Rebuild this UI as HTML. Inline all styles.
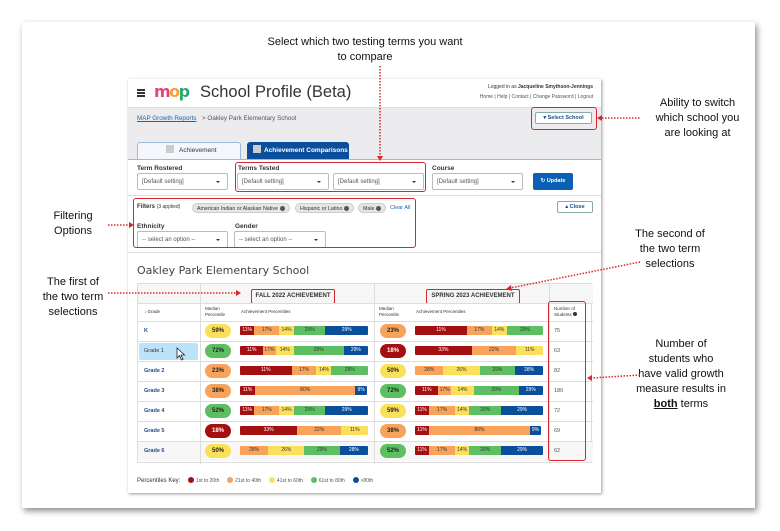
<!DOCTYPE html>
<html><head><meta charset="utf-8">
<style>
*{margin:0;padding:0;box-sizing:border-box}
body{width:780px;height:531px;background:#fff;position:relative;overflow:hidden;font-family:"Liberation Sans",sans-serif;color:#222}
.abs{position:absolute}
.frame{left:22px;top:22px;width:733px;height:486px;background:#fff;box-shadow:2px 3px 6px rgba(0,0,0,.45)}
.panel{left:128px;top:79px;width:473px;height:414px;background:#fff;box-shadow:1px 1px 3px rgba(0,0,0,.4);overflow:hidden}
.ann{position:absolute;font-size:11px;line-height:15px;text-align:center;color:#111}
.rb{position:absolute;border:1.5px solid #d8262e;border-radius:3px}
.sel{position:absolute;height:17px;border:1px solid #bbb;border-radius:2px;background:#fff;font-size:6px;color:#555;padding:5px 4px 0 4px}
.sel:after{content:"";position:absolute;right:7px;top:7px;border:2px solid transparent;border-top:2.5px solid #333}
.lbl{position:absolute;font-size:6.5px;font-weight:bold;color:#333}
.chip{position:absolute;top:124px;height:10px;border-radius:5px;background:#e6e6e6;border:1px solid #ccc;font-size:5.3px;color:#333;padding:1.5px 4px 0 4px;white-space:nowrap}
.chip b{display:inline-block;width:5px;height:5px;border-radius:50%;background:#555;margin-left:2px;vertical-align:-1px}
.tbl{position:absolute;left:9px;top:204px;width:455px;border:1px solid #ddd}
.row{position:absolute;left:0;width:455px;border-top:1px solid #ddd}
.pill{position:absolute;width:26px;height:14px;border-radius:7px;font-size:6px;font-weight:bold;text-align:center;line-height:14px;color:#222}
.bar{position:absolute;height:9px;display:flex;border-radius:1px;overflow:hidden}
.bar span{display:block;height:9px;font-size:5px;line-height:9px;text-align:center;color:#333}
.r{background:#a40f12;color:#fff!important}.o{background:#f7a35c}.y{background:#fbe15b}.g{background:#5dbe62}.b{background:#0b4f9c;color:#fff!important}
.gr{position:absolute;left:6px;font-size:5.5px;font-weight:bold;color:#1b4d87}
.n{position:absolute;left:416px;font-size:5.5px;color:#555}
.vl{position:absolute;top:0;width:1px;background:#ddd}
</style></head><body>
<div class="abs frame"></div>

<div class="ann" style="left:240px;top:35px;width:250px">Select which two testing terms you want<br>to compare</div>
<div class="ann" style="left:630px;top:96px;width:135px">Ability to switch<br>which school you<br>are looking at</div>
<div class="ann" style="left:30px;top:209px;width:86px">Filtering<br>Options</div>
<div class="ann" style="left:25px;top:275px;width:96px">The first of<br>the two term<br>selections</div>
<div class="ann" style="left:615px;top:227px;width:110px">The second of<br>the two term<br>selections</div>
<div class="ann" style="left:618px;top:337px;width:126px">Number of<br>students who<br>have valid growth<br>measure results in<br><b><u>both</u></b> terms</div>

<div class="abs panel">
 <div class="abs" style="left:9px;top:10px;width:8px;height:1.5px;background:#333;box-shadow:0 3px 0 #333,0 6px 0 #333"></div>
 <div class="abs" style="left:26px;top:3px;font-size:16px;font-weight:bold;letter-spacing:-1.5px;font-family:'DejaVu Sans',sans-serif"><span style="color:#e0457b">m</span><span style="color:#f2a33a">o</span><span style="color:#2aa876">p</span></div>
 <div class="abs" style="left:72px;top:4px;font-size:16.5px;color:#333;font-family:'Liberation Sans',sans-serif">School Profile (Beta)</div>
 <div class="abs" style="right:8px;top:5px;font-size:5px;color:#333">Logged in as <b>Jacqueline Smythson-Jennings</b></div>
 <div class="abs" style="right:8px;top:15px;font-size:5px;color:#555">Home | Help | Contact | Change Password | Logout</div>
 <div class="abs" style="left:0;top:28px;width:473px;height:52px;background:#ececef;border-top:1px solid #ddd"></div>
 <div class="abs" style="left:9px;top:36px;font-size:6.3px;color:#1b63b0;text-decoration:underline">MAP Growth Reports</div>
 <div class="abs" style="left:74px;top:36px;font-size:6.3px;color:#555">&gt; Oakley Park Elementary School</div>
 <div class="abs" style="left:407px;top:33px;width:57px;height:12px;background:#fff;border:1px solid #8aa;border-radius:2px;font-size:5.5px;font-weight:bold;color:#1b4d87;text-align:center;line-height:10px">▾ Select School</div>
 <div class="rb" style="left:403px;top:28px;width:66px;height:23px"></div>
 <div class="abs" style="left:9px;top:63px;width:104px;height:18px;background:#f4f8fc;border:1px solid #9bbbd8;border-bottom:none;border-radius:3px 3px 0 0;font-size:6.5px;color:#333;line-height:16px"><span style="display:inline-block;width:8px;height:8px;background:#ccc;margin:0 5px 0 28px;vertical-align:-1px"></span>Achievement</div>
 <div class="abs" style="left:119px;top:63px;width:102px;height:18px;background:#0b4f9c;border-radius:3px 3px 0 0;font-size:6.5px;font-weight:bold;color:#fff;line-height:17px"><span style="display:inline-block;width:8px;height:8px;background:#ccc;margin:0 3px 0 6px;vertical-align:-1px"></span>Achievement Comparisons</div>
 <div class="abs" style="left:0;top:80px;width:473px;height:1px;background:#9bbbd8"></div>
 <div class="lbl" style="left:9px;top:86px">Term Rostered</div>
 <div class="sel" style="left:9px;top:94px;width:91px">[Default setting]</div>
 <div class="lbl" style="left:110px;top:86px">Terms Tested</div>
 <div class="sel" style="left:109px;top:94px;width:92px">[Default setting]</div>
 <div class="sel" style="left:205px;top:94px;width:91px">[Default setting]</div>
 <div class="rb" style="left:107px;top:83px;width:191px;height:30px"></div>
 <div class="lbl" style="left:304px;top:86px">Course</div>
 <div class="sel" style="left:304px;top:94px;width:91px">[Default setting]</div>
 <div class="abs" style="left:405px;top:94px;width:40px;height:17px;background:#0b5fb4;border-radius:2px;color:#fff;font-size:5.5px;font-weight:bold;text-align:center;line-height:17px">↻ Update</div>
 <div class="abs" style="left:0;top:116px;width:473px;height:1px;background:#ddd"></div>
 <div class="abs" style="left:9px;top:125px;font-size:6px;color:#333"><b>Filters</b> <span style="font-size:5px">(3 applied)</span></div>
 <div class="chip" style="left:64px">American Indian or Alaskan Native<b></b></div>
 <div class="chip" style="left:167px">Hispanic or Latino<b></b></div>
 <div class="chip" style="left:230px">Male<b></b></div>
 <div class="abs" style="left:262px;top:126px;font-size:5.5px;color:#1b63b0">Clear All</div>
 <div class="abs" style="left:429px;top:122px;width:36px;height:12px;border:1px solid #8aa;border-radius:2px;font-size:5.5px;font-weight:bold;color:#1b4d87;text-align:center;line-height:10px">▴ Close</div>
 <div class="lbl" style="left:9px;top:144px">Ethnicity</div>
 <div class="sel" style="left:9px;top:152px;width:91px">-- select an option --</div>
 <div class="lbl" style="left:107px;top:144px">Gender</div>
 <div class="sel" style="left:106px;top:152px;width:92px">-- select an option --</div>
 <div class="rb" style="left:5px;top:119px;width:283px;height:50px"></div>
 <div class="abs" style="left:0;top:173px;width:473px;height:1px;background:#ddd"></div>
 <div class="abs" style="left:9px;top:185px;font-size:11px;color:#444;font-family:'DejaVu Sans',sans-serif">Oakley Park Elementary School</div>
 <div class="tbl" style="height:180px;background:#fff">
  <div class="abs" style="left:0;top:0;width:455px;height:19px;background:#f6f6f6"></div>
  <div class="vl" style="left:62px;height:180px"></div>
  <div class="vl" style="left:236px;height:180px"></div>
  <div class="vl" style="left:411px;height:180px"></div>
  <div class="abs" style="left:113px;top:5px;width:84px;height:15px;border:1.5px solid #d8262e;border-radius:2px;font-size:6px;font-weight:bold;color:#333;text-align:center;line-height:12px">FALL 2022 ACHIEVEMENT</div>
  <div class="abs" style="left:288px;top:5px;width:94px;height:15px;border:1.5px solid #d8262e;border-radius:2px;font-size:6px;font-weight:bold;color:#333;text-align:center;line-height:12px">SPRING 2023 ACHIEVEMENT</div>
  <div class="row" style="top:19px;height:18px"></div>
  <div class="abs" style="left:6px;top:25px;font-size:4.5px;color:#333">↓ Grade</div>
  <div class="abs" style="left:67px;top:22px;font-size:4.5px;color:#333;line-height:6px">Median<br>Percentile</div>
  <div class="abs" style="left:103px;top:25px;font-size:4.5px;color:#333">Achievement Percentiles</div>
  <div class="abs" style="left:241px;top:22px;font-size:4.5px;color:#333;line-height:6px">Median<br>Percentile</div>
  <div class="abs" style="left:278px;top:25px;font-size:4.5px;color:#333">Achievement Percentiles</div>
  <div class="abs" style="left:416px;top:22px;font-size:4.5px;color:#333;line-height:6px">Number of<br>Students <span style="display:inline-block;width:4px;height:4px;border-radius:50%;background:#333"></span></div>
 </div>
 <div class="abs" style="left:9px;top:398px;font-size:6px;color:#333;white-space:nowrap">Percentiles Key:
  <span style="display:inline-block;width:6px;height:6px;border-radius:50%;background:#a40f12;margin:0 2px 0 6px;vertical-align:-1px"></span><span style="font-size:5px;color:#555">1st to 20th</span>
  <span style="display:inline-block;width:6px;height:6px;border-radius:50%;background:#f7a35c;margin:0 2px 0 6px;vertical-align:-1px"></span><span style="font-size:5px;color:#555">21st to 40th</span>
  <span style="display:inline-block;width:6px;height:6px;border-radius:50%;background:#fbe15b;margin:0 2px 0 6px;vertical-align:-1px"></span><span style="font-size:5px;color:#555">41st to 60th</span>
  <span style="display:inline-block;width:6px;height:6px;border-radius:50%;background:#5dbe62;margin:0 2px 0 6px;vertical-align:-1px"></span><span style="font-size:5px;color:#555">61st to 80th</span>
  <span style="display:inline-block;width:6px;height:6px;border-radius:50%;background:#0b4f9c;margin:0 2px 0 6px;vertical-align:-1px"></span><span style="font-size:5px;color:#555">&gt;80th</span>
 </div>
</div>

<div class="abs" style="left:138px;top:284px;width:455px;height:180px">
 <div class="row" style="top:37px;height:20px"></div><div class="gr" style="top:44px">K</div>
 <div class="pill y" style="left:67px;top:40px">59%</div>
 <div class="bar" style="left:102px;top:42px;width:128px"><span class="r" style="flex:43">11%</span><span class="o" style="flex:75">17%</span><span class="y" style="flex:44">14%</span><span class="g" style="flex:95">29%</span><span class="b" style="flex:128">29%</span></div>
 <div class="pill o" style="left:242px;top:40px">23%</div>
 <div class="bar" style="left:277px;top:42px;width:128px"><span class="r" style="flex:155">11%</span><span class="o" style="flex:75">17%</span><span class="y" style="flex:45">14%</span><span class="g" style="flex:108">29%</span></div>
 <div class="n" style="top:44px">75</div>
 <div class="row" style="top:57px;height:20px"></div>
 <div class="abs" style="left:1px;top:59px;width:59px;height:17px;background:#bde3fa;border-radius:2px"></div>
 <div class="gr" style="top:64px;font-weight:normal;color:#333">Grade 1</div>
 <svg class="abs" style="left:38px;top:63px" width="10" height="14"><path d="M1 1 L1 11 L3.5 8.5 L5.5 13 L7 12.3 L5 8 L8.5 8 Z" fill="#fff" stroke="#222" stroke-width=".8"/></svg>
 <div class="pill g" style="left:67px;top:60px">72%</div>
 <div class="bar" style="left:102px;top:62px;width:128px"><span class="r" style="flex:70">11%</span><span class="o" style="flex:37">17%</span><span class="y" style="flex:55">14%</span><span class="g" style="flex:150">29%</span><span class="b" style="flex:73">29%</span></div>
 <div class="pill r" style="left:242px;top:60px">18%</div>
 <div class="bar" style="left:277px;top:62px;width:128px"><span class="r" style="flex:170">33%</span><span class="o" style="flex:133">22%</span><span class="y" style="flex:80">11%</span></div>
 <div class="n" style="top:64px">63</div>
 <div class="row" style="top:77px;height:20px"></div><div class="gr" style="top:84px">Grade 2</div>
 <div class="pill o" style="left:67px;top:80px">23%</div>
 <div class="bar" style="left:102px;top:82px;width:128px"><span class="r" style="flex:155">11%</span><span class="o" style="flex:75">17%</span><span class="y" style="flex:45">14%</span><span class="g" style="flex:110">29%</span></div>
 <div class="pill y" style="left:242px;top:80px">50%</div>
 <div class="bar" style="left:277px;top:82px;width:128px"><span class="o" style="flex:85">28%</span><span class="y" style="flex:108">26%</span><span class="g" style="flex:107">29%</span><span class="b" style="flex:83">28%</span></div>
 <div class="n" style="top:84px">82</div>
 <div class="row" style="top:97px;height:20px"></div><div class="gr" style="top:104px">Grade 3</div>
 <div class="pill o" style="left:67px;top:100px">38%</div>
 <div class="bar" style="left:102px;top:102px;width:127px"><span class="r" style="flex:45">11%</span><span class="o" style="flex:300">80%</span><span class="b" style="flex:35">9%</span></div>
 <div class="pill g" style="left:242px;top:100px">72%</div>
 <div class="bar" style="left:277px;top:102px;width:128px"><span class="r" style="flex:70">11%</span><span class="o" style="flex:37">17%</span><span class="y" style="flex:70">14%</span><span class="g" style="flex:133">29%</span><span class="b" style="flex:73">29%</span></div>
 <div class="n" style="top:104px">180</div>
 <div class="row" style="top:117px;height:20px"></div><div class="gr" style="top:124px">Grade 4</div>
 <div class="pill g" style="left:67px;top:120px">52%</div>
 <div class="bar" style="left:102px;top:122px;width:128px"><span class="r" style="flex:43">11%</span><span class="o" style="flex:75">17%</span><span class="y" style="flex:44">14%</span><span class="g" style="flex:95">29%</span><span class="b" style="flex:128">29%</span></div>
 <div class="pill y" style="left:242px;top:120px">59%</div>
 <div class="bar" style="left:277px;top:122px;width:128px"><span class="r" style="flex:42">11%</span><span class="o" style="flex:78">17%</span><span class="y" style="flex:42">14%</span><span class="g" style="flex:96">29%</span><span class="b" style="flex:125">29%</span></div>
 <div class="n" style="top:124px">72</div>
 <div class="row" style="top:137px;height:20px"></div><div class="gr" style="top:144px">Grade 5</div>
 <div class="pill r" style="left:67px;top:140px">18%</div>
 <div class="bar" style="left:102px;top:142px;width:128px"><span class="r" style="flex:172">33%</span><span class="o" style="flex:133">22%</span><span class="y" style="flex:80">11%</span></div>
 <div class="pill o" style="left:242px;top:140px">38%</div>
 <div class="bar" style="left:277px;top:142px;width:126px"><span class="r" style="flex:42">11%</span><span class="o" style="flex:303">80%</span><span class="b" style="flex:33">9%</span></div>
 <div class="n" style="top:144px">69</div>
 <div class="row" style="top:157px;height:20px;background:#f7f7f7"></div><div class="gr" style="top:164px">Grade 6</div>
 <div class="pill y" style="left:67px;top:160px">50%</div>
 <div class="bar" style="left:102px;top:162px;width:128px"><span class="o" style="flex:85">28%</span><span class="y" style="flex:108">26%</span><span class="g" style="flex:107">29%</span><span class="b" style="flex:85">28%</span></div>
 <div class="pill g" style="left:242px;top:160px">52%</div>
 <div class="bar" style="left:277px;top:162px;width:128px"><span class="r" style="flex:42">11%</span><span class="o" style="flex:78">17%</span><span class="y" style="flex:42">14%</span><span class="g" style="flex:96">29%</span><span class="b" style="flex:125">29%</span></div>
 <div class="n" style="top:164px">62</div>
 <div class="vl" style="left:62px;top:37px;height:140px"></div>
 <div class="vl" style="left:236px;top:37px;height:140px"></div>
 <div class="vl" style="left:411px;top:37px;height:140px"></div>
 <div class="rb" style="left:410px;top:17px;width:38px;height:160px"></div>
</div>

<svg class="abs" style="left:0;top:0" width="780" height="531">
<g stroke="#d8262e" stroke-width="1.5" stroke-dasharray="1.5 1.5" fill="none">
<line x1="380" y1="66" x2="380" y2="156"/>
<line x1="602" y1="118" x2="640" y2="118"/>
<line x1="108" y1="225" x2="129" y2="225"/>
<line x1="108" y1="293" x2="236" y2="293"/>
<line x1="640" y1="262" x2="510" y2="288"/>
<line x1="640" y1="375" x2="592" y2="378"/>
</g>
<g fill="#d8262e">
<polygon points="377,156 383,156 380,161"/>
<polygon points="602,115 602,121 597,118"/>
<polygon points="129,222 129,228 134,225"/>
<polygon points="236,290 236,296 241,293"/>
<polygon points="511,285 512,291 506,289"/>
<polygon points="592,375 592,381 587,378"/>
</g>
</svg>
</body></html>
